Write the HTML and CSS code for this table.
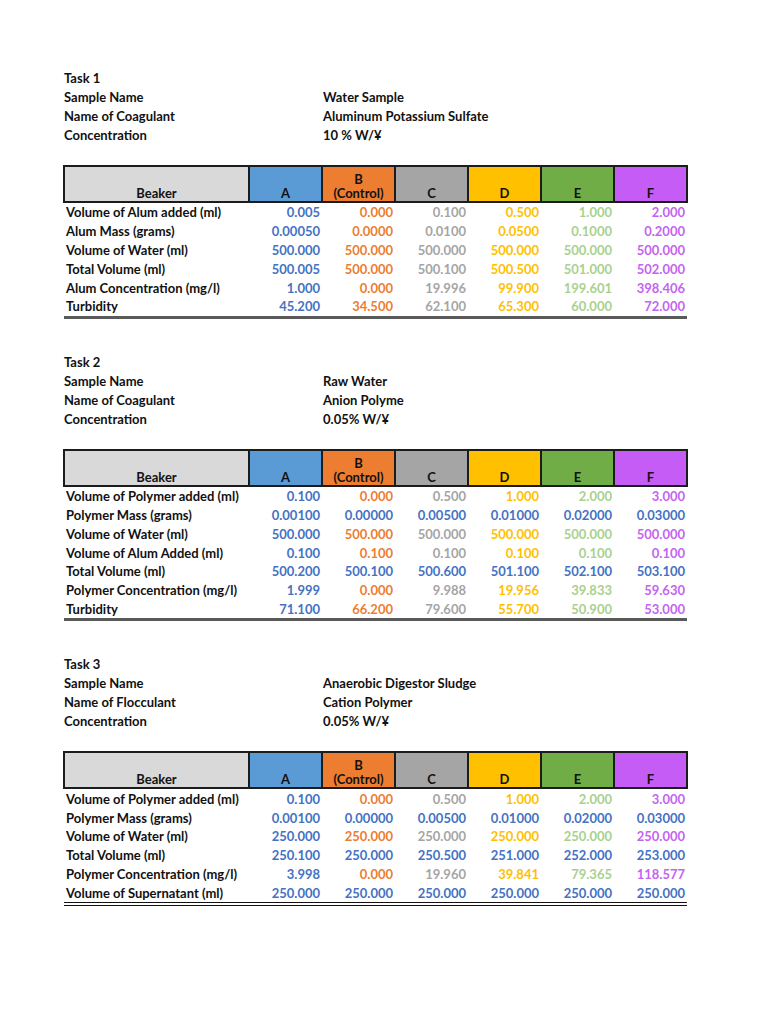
FILE: index.html
```html
<!DOCTYPE html>
<html>
<head>
<meta charset="utf-8">
<link rel="stylesheet" href="styles.css">
</head>
<body>
<div class="page">

  <section class="task">
    <div class="info">
      <div>Task 1</div><div></div>
      <div>Sample Name</div><div>Water Sample</div>
      <div>Name of Coagulant</div><div>Aluminum Potassium Sulfate</div>
      <div>Concentration</div><div>10 % W/¥</div>
    </div>
    <table class="data single">
      <colgroup><col class="col-label"><col class="col-v"><col class="col-v"><col class="col-v"><col class="col-v"><col class="col-v"><col class="col-v"></colgroup>
      <thead>
        <tr><th class="h-beaker">Beaker</th><th class="h-a">A</th><th class="h-b">B<br>(Control)</th><th class="h-c">C</th><th class="h-d">D</th><th class="h-e">E</th><th class="h-f">F</th></tr>
      </thead>
      <tbody>
        <tr><td>Volume of Alum added (ml)</td><td class="ca">0.005</td><td class="cb">0.000</td><td class="cc">0.100</td><td class="cd">0.500</td><td class="ce">1.000</td><td class="cf">2.000</td></tr>
        <tr><td>Alum Mass (grams)</td><td class="ca">0.00050</td><td class="cb">0.0000</td><td class="cc">0.0100</td><td class="cd">0.0500</td><td class="ce">0.1000</td><td class="cf">0.2000</td></tr>
        <tr><td>Volume of Water (ml)</td><td class="ca">500.000</td><td class="cb">500.000</td><td class="cc">500.000</td><td class="cd">500.000</td><td class="ce">500.000</td><td class="cf">500.000</td></tr>
        <tr><td>Total Volume (ml)</td><td class="ca">500.005</td><td class="cb">500.000</td><td class="cc">500.100</td><td class="cd">500.500</td><td class="ce">501.000</td><td class="cf">502.000</td></tr>
        <tr><td>Alum Concentration (mg/l)</td><td class="ca">1.000</td><td class="cb">0.000</td><td class="cc">19.996</td><td class="cd">99.900</td><td class="ce">199.601</td><td class="cf">398.406</td></tr>
        <tr class="last"><td>Turbidity</td><td class="ca">45.200</td><td class="cb">34.500</td><td class="cc">62.100</td><td class="cd">65.300</td><td class="ce">60.000</td><td class="cf">72.000</td></tr>
      </tbody>
    </table>
  </section>

  <section class="task">
    <div class="info">
      <div>Task 2</div><div></div>
      <div>Sample Name</div><div>Raw Water</div>
      <div>Name of Coagulant</div><div>Anion Polyme</div>
      <div>Concentration</div><div>0.05% W/¥</div>
    </div>
    <table class="data single">
      <colgroup><col class="col-label"><col class="col-v"><col class="col-v"><col class="col-v"><col class="col-v"><col class="col-v"><col class="col-v"></colgroup>
      <thead>
        <tr><th class="h-beaker">Beaker</th><th class="h-a">A</th><th class="h-b">B<br>(Control)</th><th class="h-c">C</th><th class="h-d">D</th><th class="h-e">E</th><th class="h-f">F</th></tr>
      </thead>
      <tbody>
        <tr><td>Volume of Polymer added (ml)</td><td class="ca">0.100</td><td class="cb">0.000</td><td class="cc">0.500</td><td class="cd">1.000</td><td class="ce">2.000</td><td class="cf">3.000</td></tr>
        <tr><td>Polymer Mass (grams)</td><td class="ca">0.00100</td><td class="ca">0.00000</td><td class="ca">0.00500</td><td class="ca">0.01000</td><td class="ca">0.02000</td><td class="ca">0.03000</td></tr>
        <tr><td>Volume of Water (ml)</td><td class="ca">500.000</td><td class="cb">500.000</td><td class="cc">500.000</td><td class="cd">500.000</td><td class="ce">500.000</td><td class="cf">500.000</td></tr>
        <tr><td>Volume of Alum Added (ml)</td><td class="ca">0.100</td><td class="cb">0.100</td><td class="cc">0.100</td><td class="cd">0.100</td><td class="ce">0.100</td><td class="cf">0.100</td></tr>
        <tr><td>Total Volume (ml)</td><td class="ca">500.200</td><td class="ca">500.100</td><td class="ca">500.600</td><td class="ca">501.100</td><td class="ca">502.100</td><td class="ca">503.100</td></tr>
        <tr><td>Polymer Concentration (mg/l)</td><td class="ca">1.999</td><td class="cb">0.000</td><td class="cc">9.988</td><td class="cd">19.956</td><td class="ce">39.833</td><td class="cf">59.630</td></tr>
        <tr class="last"><td>Turbidity</td><td class="ca">71.100</td><td class="cb">66.200</td><td class="cc">79.600</td><td class="cd">55.700</td><td class="ce">50.900</td><td class="cf">53.000</td></tr>
      </tbody>
    </table>
  </section>

  <section class="task">
    <div class="info">
      <div>Task 3</div><div></div>
      <div>Sample Name</div><div>Anaerobic Digestor Sludge</div>
      <div>Name of Flocculant</div><div>Cation Polymer</div>
      <div>Concentration</div><div>0.05% W/¥</div>
    </div>
    <table class="data double">
      <colgroup><col class="col-label"><col class="col-v"><col class="col-v"><col class="col-v"><col class="col-v"><col class="col-v"><col class="col-v"></colgroup>
      <thead>
        <tr><th class="h-beaker">Beaker</th><th class="h-a">A</th><th class="h-b">B<br>(Control)</th><th class="h-c">C</th><th class="h-d">D</th><th class="h-e">E</th><th class="h-f">F</th></tr>
      </thead>
      <tbody>
        <tr><td>Volume of Polymer added (ml)</td><td class="ca">0.100</td><td class="cb">0.000</td><td class="cc">0.500</td><td class="cd">1.000</td><td class="ce">2.000</td><td class="cf">3.000</td></tr>
        <tr><td>Polymer Mass (grams)</td><td class="ca">0.00100</td><td class="ca">0.00000</td><td class="ca">0.00500</td><td class="ca">0.01000</td><td class="ca">0.02000</td><td class="ca">0.03000</td></tr>
        <tr><td>Volume of Water (ml)</td><td class="ca">250.000</td><td class="cb">250.000</td><td class="cc">250.000</td><td class="cd">250.000</td><td class="ce">250.000</td><td class="cf">250.000</td></tr>
        <tr><td>Total Volume (ml)</td><td class="ca">250.100</td><td class="ca">250.000</td><td class="ca">250.500</td><td class="ca">251.000</td><td class="ca">252.000</td><td class="ca">253.000</td></tr>
        <tr><td>Polymer Concentration (mg/l)</td><td class="ca">3.998</td><td class="cb">0.000</td><td class="cc">19.960</td><td class="cd">39.841</td><td class="ce">79.365</td><td class="cf">118.577</td></tr>
        <tr class="last"><td>Volume of Supernatant (ml)</td><td class="ca">250.000</td><td class="ca">250.000</td><td class="ca">250.000</td><td class="ca">250.000</td><td class="ca">250.000</td><td class="ca">250.000</td></tr>
      </tbody>
    </table>
  </section>

</div>
</body>
</html>
```

FILE: styles.css
```css
html, body {
  margin: 0;
  padding: 0;
  background: #ffffff;
}

body {
  font-family: Lato, "Open Sans", "Liberation Sans", sans-serif;
  font-weight: 700;
  font-size: 13px;
  color: #111111;
}

.page {
  padding: 69px 0 0 64px;
  display: flex;
  flex-direction: column;
  gap: 34px;
}

.info {
  display: grid;
  grid-template-columns: 259px auto;
  line-height: 19px;
}

.data {
  margin-top: 20px;
  margin-left: -1px;
  border-collapse: collapse;
  table-layout: fixed;
  width: 623px;
}

.col-label { width: 185px; }
.col-v { width: 73px; }

.data th {
  height: 33px;
  border: 2px solid #1c1c1c;
  font-weight: 700;
  text-align: center;
  vertical-align: bottom;
  line-height: 14px;
  padding: 0 0 1px 0;
}

.h-beaker { background: #d9d9d9; }
.h-a { background: #5b9bd5; }
.h-b { background: #ed7d31; }
.h-c { background: #a5a5a5; }
.h-d { background: #ffc000; }
.h-e { background: #70ad47; }
.h-f { background: #c65cf6; }

.data td {
  height: 18.8px;
  padding: 0 2px 0 2px;
  line-height: 18px;
  text-align: right;
  white-space: nowrap;
  overflow: visible;
}

.data td:first-child {
  text-align: left;
  padding-left: 2px;
}

.ca { color: #4472c4; }
.cb { color: #ed7d31; }
.cc { color: #a5a5a5; }
.cd { color: #ffc000; }
.ce { color: #a9d18e; }
.cf { color: #c464f2; }

.single tr.last td {
  border-bottom: 3px solid #5a5a5a;
}

.double tr.last td {
  border-bottom: 4px double #111111;
}
```
